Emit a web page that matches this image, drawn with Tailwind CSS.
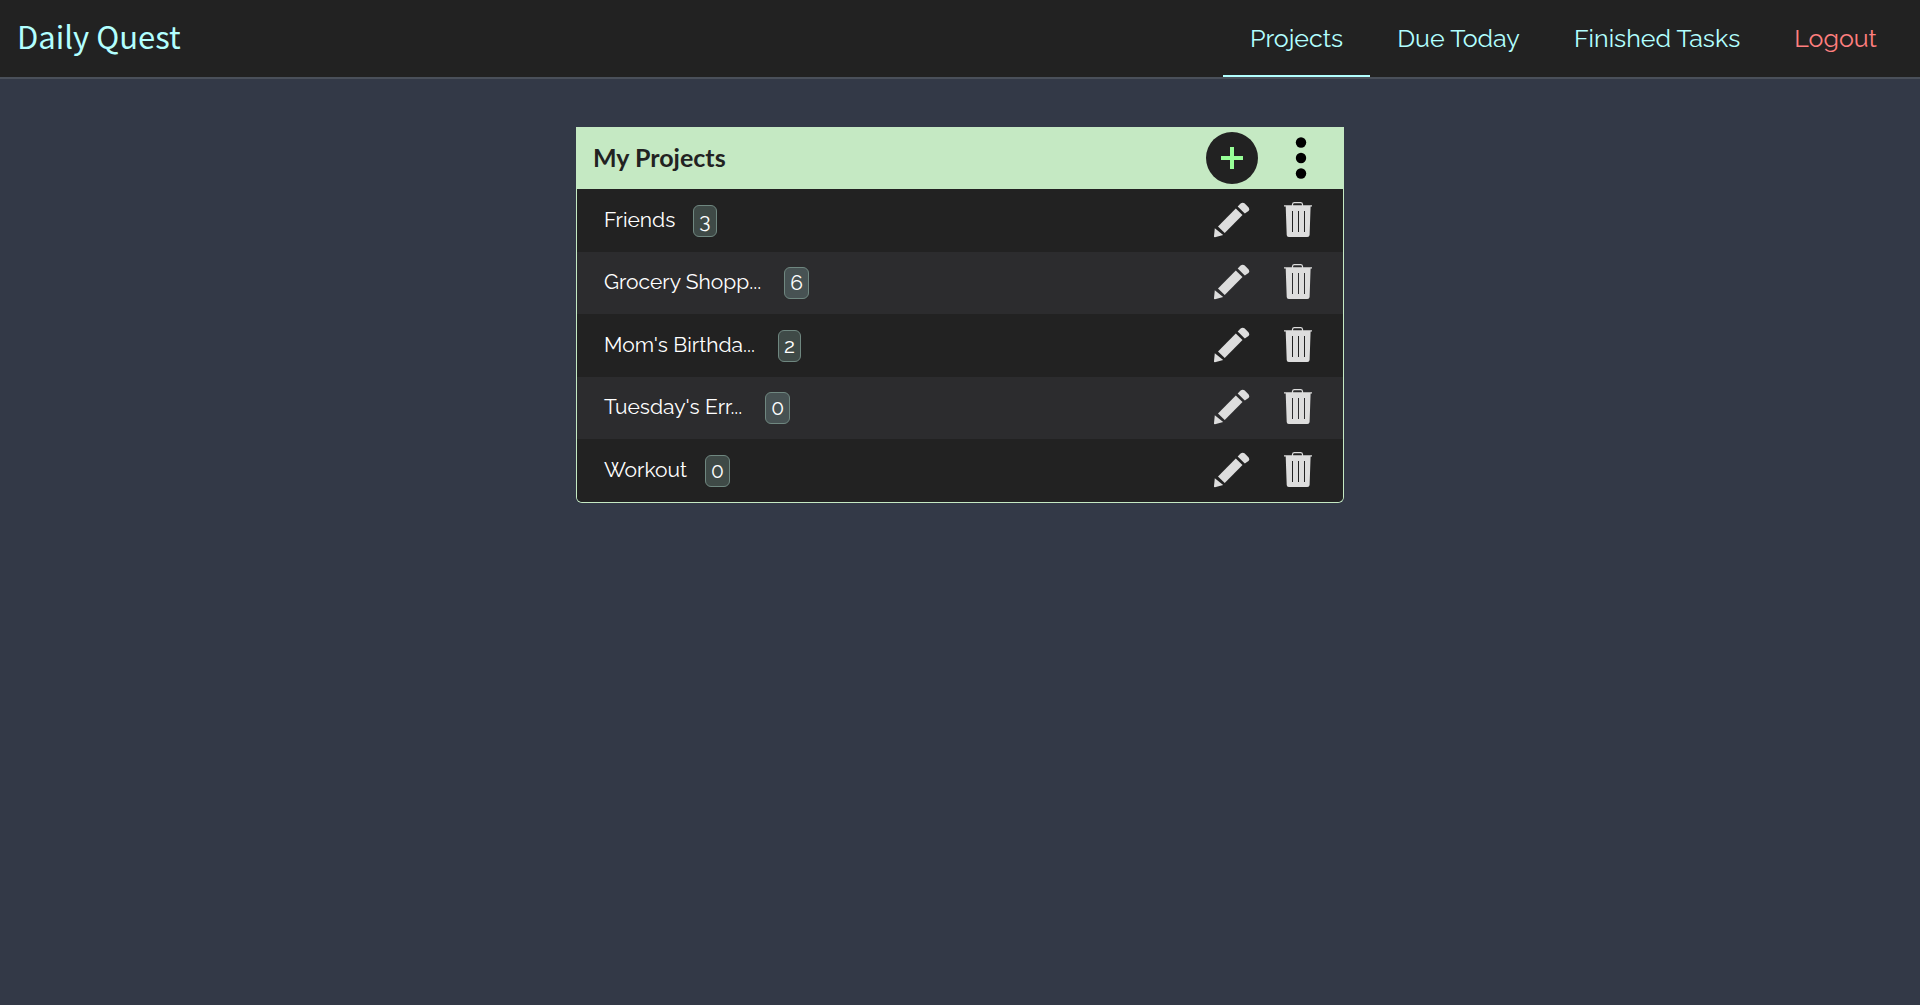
<!DOCTYPE html>
<html lang="en">

<head>
  <meta charset="UTF-8" />
  <title>Daily Quest</title>
  <script src="https://cdn.jsdelivr.net/npm/@tailwindcss/browser@4"></script>
  <meta name="viewport" content="width=device-width, initial-scale=1.0" />
</head>

<body class="min-h-screen bg-[#333947] text-white font-['Raleway',sans-serif]">

  <!-- shared icons -->
  <svg class="hidden" aria-hidden="true">
    <symbol id="pencil" viewBox="0 0 36 36">
      <path d="M0.8 26.3 9.2 33 1 35.3Q-0.3 35.4 0 34Z" />
      <path d="M4 24.5 21.8 6.4 28.5 13 10.7 31Z" />
      <path d="M23.7 4.4 26.6 1.6Q28.6-.2 30.8 1.5L34.2 5Q36 7 34.5 9L30.8 11.4Z" />
    </symbol>
    <symbol id="trash" viewBox="0 0 28 36">
      <path d="M8.5 4V2.4Q8.7.7 10.4.7H16.6Q18.3.7 18.5 2.4V4" fill="none" stroke="currentColor" stroke-width="1.2" />
      <path fill-rule="evenodd"
        d="M0 3.3H28V4.6H26.6L25.6 33Q25.4 35 23.4 35H4.8Q2.8 35 2.7 33L1.7 4.6H0ZM8 9V30H9V9ZM14 9V30H15V9ZM20 9V30H21V9Z" />
    </symbol>
  </svg>

  <header class="flex h-[79px] items-stretch justify-between border-b-2 border-[#4a505a] bg-[#222222] px-4">
    <a href="#" class="flex items-center pb-1.5 pl-px font-['Noto_Sans_CJK_SC',sans-serif] text-[31px] leading-9 text-[#b2ffff]">Daily Quest</a>
    <nav class="flex text-[25px] text-[#b2ffff]">
      <a href="#" class="flex items-center border-b-2 border-[#b2ffff] px-[27px] pt-[2px]">Projects</a>
      <a href="#" class="flex items-center border-b-2 border-transparent px-[27px] pt-[2px]">Due Today</a>
      <a href="#" class="flex items-center border-b-2 border-transparent px-[27px] pt-[2px]">Finished Tasks</a>
      <a href="#" class="flex items-center border-b-2 border-transparent px-[27px] pt-[2px] text-[#ff7f7f]">Logout</a>
    </nav>
  </header>

  <main class="mx-auto mt-12 max-w-3xl">
    <div class="flex h-[62px] items-center bg-[#c5e9c3] pr-[37px] pl-[17px]">
      <h1 class="flex-1 font-['Lato',sans-serif] text-[25px] font-bold text-[#222222]">My Projects</h1>
      <button aria-label="Add project" class="flex size-[52px] items-center justify-center rounded-full bg-[#222222]">
        <svg class="size-[22px] text-[#98ff98]" viewBox="0 0 22 22" fill="currentColor"><path d="M9 0h4v9h9v4h-9v9H9v-9H0V9h9z" /></svg>
      </button>
      <button aria-label="More options" class="ml-[37px]">
        <svg class="h-[42px] w-3" viewBox="0 0 12 42" fill="black"><circle cx="6" cy="5.5" r="5.2" /><circle cx="6" cy="21" r="5.2" /><circle cx="6" cy="36.5" r="5.2" /></svg>
      </button>
    </div>

    <ul class="overflow-hidden rounded-b-md border border-t-0 border-[#c5e9c3] text-[21px]">
      <li class="flex h-[63px] items-center bg-[#222222] pr-[31px] pb-[2px] pl-[27px]">
        <a href="#">Friends</a>
        <span class="mt-[2px] ml-[18px] flex h-8 items-center rounded-md border border-[#6f8780] bg-[#3f4a47] px-[5px]">3</span>
        <button aria-label="Edit Friends" class="ml-auto"><svg class="size-9 fill-[#dddddd]"><use href="#pencil" /></svg></button>
        <button aria-label="Delete Friends" class="ml-[34px] text-[#dddddd]"><svg class="h-9 w-7 fill-[#dddddd]"><use href="#trash" /></svg></button>
      </li>
      <li class="flex h-[62px] items-center bg-[#2c2c2e] pr-[31px] pb-[2px] pl-[27px]">
        <a href="#">Grocery Shopp...</a>
        <span class="mt-[2px] ml-[23px] flex h-8 items-center rounded-md border border-[#6f8780] bg-[#475253] px-[5px]">6</span>
        <button aria-label="Edit Grocery Shopping" class="ml-auto"><svg class="size-9 fill-[#dddddd]"><use href="#pencil" /></svg></button>
        <button aria-label="Delete Grocery Shopping" class="ml-[34px] text-[#dddddd]"><svg class="h-9 w-7 fill-[#dddddd]"><use href="#trash" /></svg></button>
      </li>
      <li class="flex h-[63px] items-center bg-[#222222] pr-[31px] pb-[2px] pl-[27px]">
        <a href="#">Mom's Birthda...</a>
        <span class="mt-[2px] ml-[23px] flex h-8 items-center rounded-md border border-[#6f8780] bg-[#3f4a47] px-[5px]">2</span>
        <button aria-label="Edit Mom's Birthday" class="ml-auto"><svg class="size-9 fill-[#dddddd]"><use href="#pencil" /></svg></button>
        <button aria-label="Delete Mom's Birthday" class="ml-[34px] text-[#dddddd]"><svg class="h-9 w-7 fill-[#dddddd]"><use href="#trash" /></svg></button>
      </li>
      <li class="flex h-[62px] items-center bg-[#2c2c2e] pr-[31px] pb-[2px] pl-[27px]">
        <a href="#">Tuesday's Err...</a>
        <span class="mt-[2px] ml-[23px] flex h-8 items-center rounded-md border border-[#6f8780] bg-[#475253] px-[5px]">0</span>
        <button aria-label="Edit Tuesday's Errands" class="ml-auto"><svg class="size-9 fill-[#dddddd]"><use href="#pencil" /></svg></button>
        <button aria-label="Delete Tuesday's Errands" class="ml-[34px] text-[#dddddd]"><svg class="h-9 w-7 fill-[#dddddd]"><use href="#trash" /></svg></button>
      </li>
      <li class="flex h-[63px] items-center bg-[#222222] pr-[31px] pb-[2px] pl-[27px]">
        <a href="#">Workout</a>
        <span class="mt-[2px] ml-[18px] flex h-8 items-center rounded-md border border-[#6f8780] bg-[#3f4a47] px-[5px]">0</span>
        <button aria-label="Edit Workout" class="ml-auto"><svg class="size-9 fill-[#dddddd]"><use href="#pencil" /></svg></button>
        <button aria-label="Delete Workout" class="ml-[34px] text-[#dddddd]"><svg class="h-9 w-7 fill-[#dddddd]"><use href="#trash" /></svg></button>
      </li>
    </ul>
  </main>
</body>

</html>
